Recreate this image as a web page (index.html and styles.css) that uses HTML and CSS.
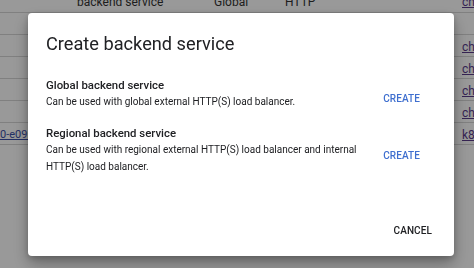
FILE: index.html
```html
<!DOCTYPE html>
<html lang="en">
<head>
  <meta charset="UTF-8" />
  <title>Create backend service</title>
  <link rel="stylesheet" href="styles.css">
</head>
<body>
  <div class="page">
    <table class="list">
      <tbody>
        <tr><td class="c0"></td><td class="c1">backend service</td><td class="c2">Global</td><td class="c3">HTTP</td><td class="c4"><a>ch</a></td></tr>
        <tr><td class="c0"></td><td></td><td></td><td></td><td class="c4"></td></tr>
        <tr><td class="c0"></td><td></td><td></td><td></td><td class="c4"><a>ch</a></td></tr>
        <tr><td class="c0"></td><td></td><td></td><td></td><td class="c4"><a>ch</a></td></tr>
        <tr><td class="c0"></td><td></td><td></td><td></td><td class="c4"><a>ch</a></td></tr>
        <tr><td class="c0"></td><td></td><td></td><td></td><td class="c4"><a>ch</a></td></tr>
        <tr><td class="c0"><a>0-e090c</a></td><td></td><td></td><td></td><td class="c4"><a>k8</a></td></tr>
      </tbody>
    </table>
  </div>
  <div class="scrim"></div>
  <div class="dialog">
    <h1>Create backend service</h1>
    <div class="option">
      <div class="text">
        <h2>Global backend service</h2>
        <p>Can be used with global external HTTP(S) load balancer.</p>
      </div>
      <button class="btn create">CREATE</button>
    </div>
    <div class="option">
      <div class="text">
        <h2>Regional backend service</h2>
        <p>Can be used with regional external HTTP(S) load balancer and internal HTTP(S) load balancer.</p>
      </div>
      <button class="btn create">CREATE</button>
    </div>
    <div class="actions">
      <button class="btn cancel">CANCEL</button>
    </div>
  </div>
</body>
</html>
```

FILE: styles.css
```css
* { box-sizing: border-box; margin: 0; padding: 0; }
html, body { width: 100%; height: 100%; overflow: hidden; font-family: Roboto, 'Noto Sans', sans-serif; background: #fff; }

.page { position: relative; top: -10px; }
.list { width: 100%; border-collapse: collapse; table-layout: fixed; font-size: 12px; color: #333; }
.list td { height: 22px; border-bottom: 1px solid #d6d6d6; padding: 3px 0 0; white-space: nowrap; }
.list .c0 { width: 62px; font-size: 11px; }
.list .c1 { width: 148px; padding-left: 15px; }
.list .c2 { width: 72px; padding-left: 4px; }
.list .c3 { width: 180px; padding-left: 3px; }
.list .c4 { width: 12px; }
.list a { color: #3b4fa8; text-decoration: underline; }
.list .c4 a { color: #5a3b8a; }

.scrim { position: fixed; inset: 0; background: rgba(0, 0, 0, 0.4); }

.dialog {
  position: fixed; left: 28px; top: 13px; width: 426px; height: 243px;
  background: #fff; border-radius: 4px;
  box-shadow: 0 8px 16px rgba(0,0,0,0.3), 0 2px 6px rgba(0,0,0,0.2);
  padding: 19px 34px 0 18px;
  display: flex; flex-direction: column;
}
h1 { font-size: 18.2px; font-weight: 400; color: #202124; line-height: 24px; margin-bottom: 21px; }
.option { display: flex; align-items: center; gap: 24px; margin-bottom: 15px; }
.option .text { flex: 1; }
h2 { font-size: 11.4px; font-weight: 500; color: #202124; line-height: 16px; }
p { font-size: 10px; color: #202124; line-height: 17px; }
.btn { background: none; border: none; font-family: Roboto, sans-serif; font-weight: 500; font-size: 10px; letter-spacing: 0.1px; cursor: pointer; }
.create { color: #3f6fcf; padding-top: 10px; }
.actions { margin-top: auto; display: flex; justify-content: flex-end; padding-bottom: 20px; }
.cancel { color: #202124; margin-right: -12px; }
```
